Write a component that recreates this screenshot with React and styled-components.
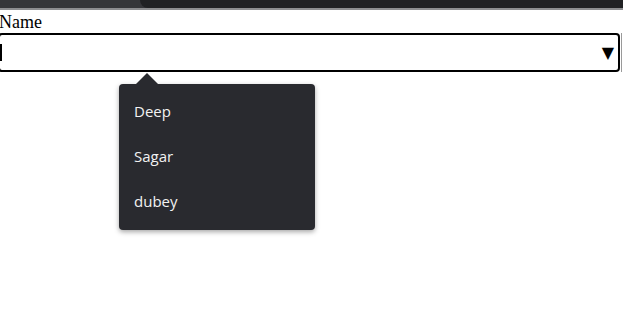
import styled, { createGlobalStyle } from 'styled-components';

const GlobalStyle = createGlobalStyle`
    html, body {
        margin: 0;
        padding: 0;
        background: #fff;
        overflow: hidden;
    }
    body {
        font-family: "Liberation Serif", serif;
    }
`;

const TabStrip = styled.div`
    display: flex;
    height: 8px;
    background: #35363a;
    border-bottom: 2px solid #8d8e91;
`;

const ActiveTab = styled.div`
    margin-left: 140px;
    flex: 1;
    background: #202124;
    border-bottom-left-radius: 8px;
`;

const Page = styled.div`
    position: relative;
    height: 302px;
`;

const Label = styled.label`
    display: block;
    font-size: 18px;
    line-height: 20px;
    color: #000;
    margin: 2px 0 1px -1px;
`;

const FieldRow = styled.div`
    display: flex;
    align-items: stretch;
`;

const SelectBox = styled.div`
    display: flex;
    align-items: center;
    justify-content: space-between;
    width: 622px;
    height: 39px;
    box-sizing: border-box;
    margin-left: -2px;
    border: 2px solid #000;
    border-radius: 4px;
`;

const Caret = styled.span`
    width: 2px;
    height: 17px;
    background: #000;
`;

const DownArrow = styled.span`
    font-size: 16px;
    color: #000;
    margin-right: 4px;
    font-family: "DejaVu Sans", sans-serif;
`;

const EdgeLine = styled.div`
    flex: none;
    width: 1px;
    margin-left: 1px;
    background: #9a9a9a;
`;

const Menu = styled.div`
    position: absolute;
    left: 119px;
    top: 72px;
    width: 196px;
    padding: 5px 0 6px;
    background: #292a2f;
    border-radius: 4px;
    box-shadow: 0 2px 5px rgba(0, 0, 0, 0.35);
    font-family: "Open Sans", "Noto Sans", sans-serif;

    &::before {
        content: '';
        position: absolute;
        top: -11px;
        left: 17px;
        border-left: 11px solid transparent;
        border-right: 11px solid transparent;
        border-bottom: 11px solid #292a2f;
    }
`;

const MenuItem = styled.div`
    height: 45px;
    line-height: 45px;
    padding-left: 15px;
    font-size: 15px;
    color: #f2f2f2;
`;

const names = ['Deep', 'Sagar', 'dubey'];

const App = () => {
    return (
        <>
            <GlobalStyle />
            <TabStrip>
                <ActiveTab />
            </TabStrip>
            <Page>
                <Label>Name</Label>
                <FieldRow>
                    <SelectBox>
                        <Caret />
                        <DownArrow>▼</DownArrow>
                    </SelectBox>
                    <EdgeLine />
                </FieldRow>
                <Menu>
                    {names.map((n) => (
                        <MenuItem key={n}>{n}</MenuItem>
                    ))}
                </Menu>
            </Page>
        </>
    );
};

export default App;
